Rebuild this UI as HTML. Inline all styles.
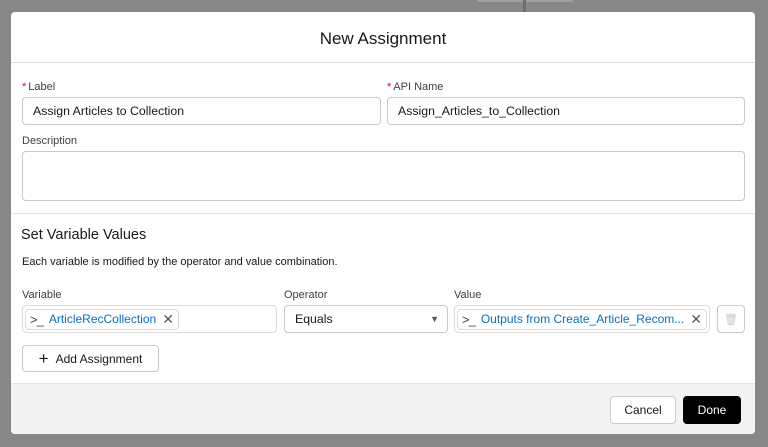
<!DOCTYPE html>
<html><head><style>
*{box-sizing:border-box;margin:0;padding:0}
body{width:768px;height:447px;background:#878787;font-family:"Liberation Sans",sans-serif;position:relative;overflow:hidden;color:#181818}
.a{position:absolute}
.modal{left:11px;top:12px;width:744px;height:422px;background:#fff;border-radius:4px;overflow:hidden}
.lbl{font-size:11px;color:#3e3e3c}
.req{color:#ea001e;margin-right:2px}
.inp{border:1px solid #c9c9c9;border-radius:4px;background:#fff;font-size:12.3px;padding-left:10px;display:flex;align-items:center}
.pill{border:1px solid #dcdcdc;border-radius:4px;height:21px;display:flex;align-items:center;font-size:12px;color:#0b6ec5;padding:0 4px}
.btn{border:1px solid #c9c9c9;border-radius:4px;background:#fff;font-size:12px;display:flex;align-items:center;justify-content:center}
</style></head><body>
<div class="a" style="left:477px;top:0;width:96px;height:2px;background:#a0a0a0;border-radius:0 0 3px 3px"></div>
<div class="a" style="left:523px;top:0;width:3px;height:12px;background:#6e6e6e"></div>
<div class="a modal">
 <div class="a" style="left:0;top:0;width:744px;height:51px;border-bottom:1px solid #dcdcdc;text-align:center;font-size:17px;line-height:53px">New Assignment</div>
 <div class="a lbl" style="left:11px;top:69px"><span class="req">*</span>Label</div>
 <div class="a inp" style="left:11px;top:85px;width:359px;height:28px">Assign Articles to Collection</div>
 <div class="a lbl" style="left:376px;top:69px"><span class="req">*</span>API Name</div>
 <div class="a inp" style="left:376px;top:85px;width:358px;height:28px">Assign_Articles_to_Collection</div>
 <div class="a lbl" style="left:11px;top:123px">Description</div>
 <div class="a inp" style="left:11px;top:139px;width:723px;height:50px"></div>
 <div class="a" style="left:0;top:201px;width:744px;height:1px;background:#e5e5e5"></div>
 <div class="a" style="left:10px;top:215px;font-size:14.5px">Set Variable Values</div>
 <div class="a" style="left:11px;top:244px;font-size:11px">Each variable is modified by the operator and value combination.</div>
 <div class="a lbl" style="left:11px;top:277px">Variable</div>
 <div class="a lbl" style="left:273px;top:277px">Operator</div>
 <div class="a lbl" style="left:443px;top:277px">Value</div>
 <div class="a inp" style="left:11px;top:293px;width:255px;height:28px;padding-left:2px;border-color:#dcdcdc">
  <div class="pill"><span style="color:#444;font-size:13px;margin-right:6px;letter-spacing:-1px">&gt;_</span>ArticleRecCollection<span style="color:#555;margin-left:6px;font-size:14px">✕</span></div></div>
 <div class="a inp" style="left:273px;top:293px;width:164px;height:28px;justify-content:space-between;padding-right:8px">Equals<span style="font-size:9px;color:#555">▼</span></div>
 <div class="a inp" style="left:443px;top:293px;width:256px;height:28px;padding-left:2px;border-color:#dcdcdc">
  <div class="pill" style="width:250px"><span style="color:#444;font-size:13px;margin-right:6px;letter-spacing:-1px">&gt;_</span>Outputs from Create_Article_Recom...<span style="color:#555;margin-left:auto;font-size:14px">✕</span></div></div>
 <div class="a btn" style="left:706px;top:293px;width:28px;height:28px;color:#c9c9c9;font-size:11px">🗑</div>
 <div class="a btn" style="left:11px;top:333px;width:137px;height:27px"><span style="font-size:17px;margin-right:7px;font-weight:300">+</span>Add Assignment</div>
 <div class="a" style="left:0;top:371px;width:744px;height:51px;background:#f3f3f3;border-top:1px solid #e5e5e5"></div>
 <div class="a btn" style="left:599px;top:384px;width:66px;height:28px">Cancel</div>
 <div class="a btn" style="left:672px;top:384px;width:58px;height:28px;background:#000;border-color:#000;color:#fff">Done</div>
</div>
</body></html>
